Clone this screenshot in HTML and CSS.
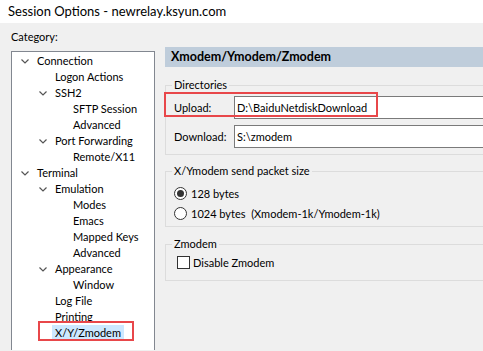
FILE: index.html
```html
<!DOCTYPE html>
<html lang="en">
<head>
    <meta charset="UTF-8">
    <title>Session Options - newrelay.ksyun.com</title>
    <link rel="stylesheet" href="styles.css">
</head>
<body>
    <div class="titlebar">Session Options - newrelay.ksyun.com</div>

    <div class="main">
        <div class="left">
            <div class="cat-label">Category:</div>
            <div class="tree">
                <div class="item lvl0"><span class="toggle open"></span><span class="label">Connection</span></div>
                <div class="item lvl1"><span class="toggle"></span><span class="label">Logon Actions</span></div>
                <div class="item lvl1"><span class="toggle open"></span><span class="label">SSH2</span></div>
                <div class="item lvl2"><span class="toggle"></span><span class="label">SFTP Session</span></div>
                <div class="item lvl2"><span class="toggle"></span><span class="label">Advanced</span></div>
                <div class="item lvl1"><span class="toggle open"></span><span class="label">Port Forwarding</span></div>
                <div class="item lvl2"><span class="toggle"></span><span class="label">Remote/X11</span></div>
                <div class="item lvl0"><span class="toggle open"></span><span class="label">Terminal</span></div>
                <div class="item lvl1"><span class="toggle open"></span><span class="label">Emulation</span></div>
                <div class="item lvl2"><span class="toggle"></span><span class="label">Modes</span></div>
                <div class="item lvl2"><span class="toggle"></span><span class="label">Emacs</span></div>
                <div class="item lvl2"><span class="toggle"></span><span class="label">Mapped Keys</span></div>
                <div class="item lvl2"><span class="toggle"></span><span class="label">Advanced</span></div>
                <div class="item lvl1"><span class="toggle open"></span><span class="label">Appearance</span></div>
                <div class="item lvl2"><span class="toggle"></span><span class="label">Window</span></div>
                <div class="item lvl1"><span class="toggle"></span><span class="label">Log File</span></div>
                <div class="item lvl1"><span class="toggle"></span><span class="label">Printing</span></div>
                <div class="item lvl1 selected"><span class="toggle"></span><span class="label">X/Y/Zmodem</span><span class="mark mark-tree"></span></div>
            </div>
        </div>

        <div class="right">
            <div class="header">Xmodem/Ymodem/Zmodem</div>

            <fieldset class="group dirs">
                <legend>Directories</legend>
                <div class="row">
                    <label>Upload:</label>
                    <div class="input">D:\BaiduNetdiskDownload</div>
                    <span class="mark mark-upload"></span>
                </div>
                <div class="row">
                    <label>Download:</label>
                    <div class="input">S:\zmodem</div>
                </div>
            </fieldset>

            <fieldset class="group packet">
                <legend>X/Ymodem send packet size</legend>
                <div class="opt"><span class="radio checked"></span>128 bytes</div>
                <div class="opt"><span class="radio"></span>1024 bytes&nbsp; (Xmodem-1k/Ymodem-1k)</div>
            </fieldset>

            <fieldset class="group zmodem">
                <legend>Zmodem</legend>
                <div class="opt check"><span class="box"></span>Disable Zmodem</div>
            </fieldset>
        </div>
    </div>
</body>
</html>
```

FILE: styles.css
```css
* {
    box-sizing: border-box;
    margin: 0;
    padding: 0;
}

html, body {
    width: 483px;
    height: 351px;
    overflow: hidden;
}

body {
    font-family: Lato, "Noto Sans", sans-serif;
    font-size: 11px;
    color: #000;
    background-color: #f0f0f0;
}

.titlebar {
    height: 23px;
    padding-left: 8px;
    line-height: 22px;
    font-size: 13px;
    background-color: #fff;
}

.main {
    display: flex;
    gap: 10px;
    padding: 6px 0 0 11px;
}

/* left: category tree, cut off by the window bottom */
.left {
    width: 144px;
    flex-shrink: 0;
}

.cat-label {
    height: 16px;
    line-height: 16px;
    margin-bottom: 6px;
}

.tree {
    position: relative;
    height: 299px;
    padding-top: 1px;
    background-color: #fff;
    border: 1px solid #828790;
    border-bottom: none;
}

.item {
    position: relative;
    display: flex;
    align-items: center;
    height: 16px;
    white-space: nowrap;
}

.lvl0 { padding-left: 7px; }
.lvl1 { padding-left: 25px; }
.lvl2 { padding-left: 43px; }

.toggle {
    width: 18px;
    height: 16px;
    flex-shrink: 0;
}

.toggle.open {
    background: no-repeat 2px 6px / 8px 5px url("data:image/svg+xml,%3Csvg xmlns='http://www.w3.org/2000/svg' width='8' height='5' viewBox='0 0 8 5'%3E%3Cpath d='M0.5 0.5 L4 4 L7.5 0.5' fill='none' stroke='%23555' stroke-width='1.2'/%3E%3C/svg%3E");
}

.label {
    height: 16px;
    line-height: 16px;
}

.selected .label {
    margin-left: -3px;
    padding: 0 3px;
    background-color: #cce8ff;
}

.mark {
    position: absolute;
    border: 2px solid #e8474a;
    pointer-events: none;
}

.mark-tree {
    left: 26px;
    top: -4px;
    width: 96px;
    height: 20px;
}

/* right: settings page, cut off by the window's right edge */
.right {
    flex: 1;
    min-width: 0;
    padding-top: 18px;
}

.header {
    height: 20px;
    line-height: 20px;
    padding-left: 6px;
    font-size: 12.5px;
    font-weight: bold;
    background-color: #bfcddb;
}

.group {
    border: 1px solid #dcdcdc;
    border-right: none;
    padding: 0 0 0 8px;
}

.group legend {
    margin-left: -2px;
    padding: 0 2px;
    line-height: 16px;
}

.dirs {
    margin-top: 10px;
    padding-top: 3px;
    padding-bottom: 6px;
}

.row {
    position: relative;
    display: flex;
    align-items: center;
    height: 23px;
}

.row + .row {
    margin-top: 6px;
}

.row label {
    width: 60px;
}

.input {
    flex: 1;
    height: 23px;
    line-height: 21px;
    padding-left: 2px;
    background-color: #fff;
    border: 1px solid #7a7a7a;
    border-right: none;
    white-space: nowrap;
}

.mark-upload {
    left: -10px;
    top: -4px;
    width: 214px;
    height: 25px;
}

.packet {
    margin-top: 8px;
    padding-top: 4px;
    padding-bottom: 3px;
}

.opt {
    display: flex;
    align-items: center;
    height: 20px;
    white-space: nowrap;
}

.radio {
    position: relative;
    width: 13px;
    height: 13px;
    margin-right: 4px;
    background-color: #fff;
    border: 1px solid #333;
    border-radius: 50%;
}

.radio.checked::after {
    content: "";
    position: absolute;
    left: 2px;
    top: 2px;
    width: 7px;
    height: 7px;
    border-radius: 50%;
    background-color: #333;
}

.zmodem {
    margin-top: 9px;
    padding-top: 0;
    padding-bottom: 8px;
}

.check {
    padding-left: 3px;
}

.box {
    width: 13px;
    height: 13px;
    margin-right: 3px;
    background-color: #fff;
    border: 1px solid #333;
}
```
